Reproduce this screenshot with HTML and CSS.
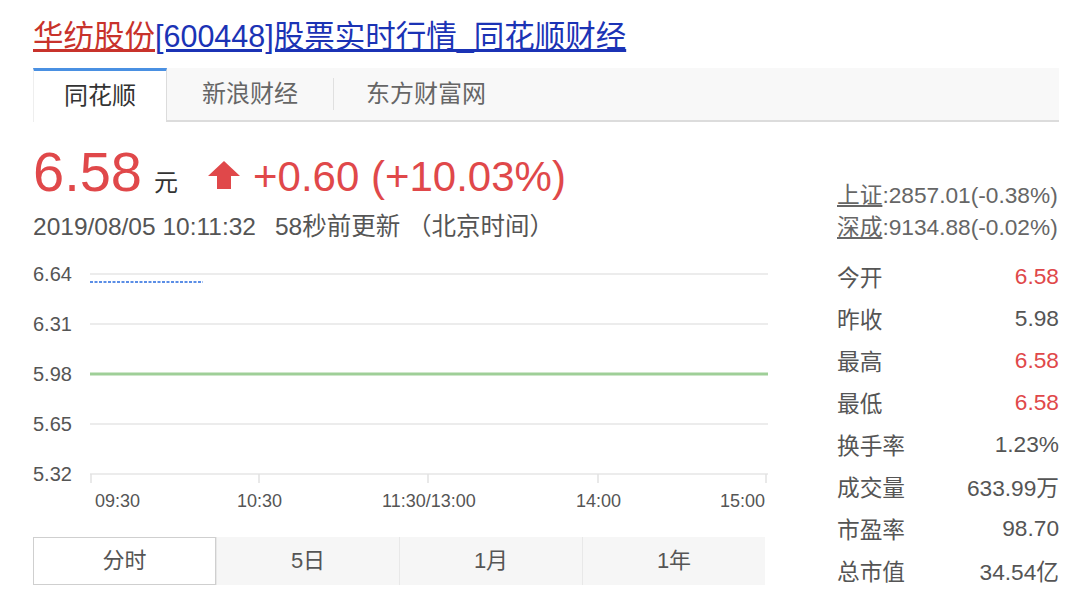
FILE: index.html
```html
<!DOCTYPE html>
<html lang="zh-CN">
<head>
<meta charset="utf-8">
<title>华纺股份[600448]股票实时行情</title>
<link rel="stylesheet" href="styles.css">
</head>
<body>
<div class="page">
  <h1 class="title"><a class="t-name" href="#">华纺股份</a><a class="t-rest" href="#">[600448]股票实时行情_同花顺财经</a></h1>
  <div class="tabs">
    <div class="tab active">同花顺</div>
    <div class="tab tab2">新浪财经</div>
    <span class="sep"></span>
    <div class="tab tab3">东方财富网</div>
  </div>
  <div class="main">
    <div class="left">
      <div class="price-row">
        <span class="price">6.58</span>
        <span class="unit">元</span>
        <svg class="arrow" width="32" height="28" viewBox="0 0 32 28"><polygon points="16,0 32,15 23,15 23,28 9,28 9,15 0,15" fill="#e0484a"/></svg>
        <span class="change">+0.60 (+10.03%)</span>
      </div>
      <div class="date">2019/08/05 10:11:32<span class="ago">58秒前更新</span> （北京时间）</div>
      <div class="chart">
        <div class="yaxis">
          <span>6.64</span><span>6.31</span><span>5.98</span><span>5.65</span><span>5.32</span>
        </div>
        <svg class="plot" width="678" height="220" viewBox="0 0 678 220">
          <g stroke="#ececec" stroke-width="2">
            <line x1="0" y1="10" x2="678" y2="10"/>
            <line x1="0" y1="60" x2="678" y2="60"/>
            <line x1="0" y1="110" x2="678" y2="110"/>
            <line x1="0" y1="160" x2="678" y2="160"/>
            <line x1="0" y1="210" x2="678" y2="210"/>
          </g>
          <g stroke="#e2e2e2" stroke-width="1.5">
            <line x1="1" y1="210" x2="1" y2="219"/>
            <line x1="169" y1="210" x2="169" y2="219"/>
            <line x1="338" y1="210" x2="338" y2="219"/>
            <line x1="508" y1="210" x2="508" y2="219"/>
            <line x1="676" y1="210" x2="676" y2="219"/>
          </g>
          <line x1="0" y1="110" x2="678" y2="110" stroke="#9fcf98" stroke-width="3"/>
          <line x1="0" y1="18" x2="113" y2="18" stroke="#5b8ee6" stroke-width="2" stroke-dasharray="3 1.5"/>
        </svg>
      </div>
      <div class="xaxis">
        <span class="x1">09:30</span>
        <span class="x2">10:30</span>
        <span class="x3">11:30/13:00</span>
        <span class="x4">14:00</span>
        <span class="x5">15:00</span>
      </div>
      <div class="periods">
        <div class="period on">分时</div>
        <div class="period">5日</div>
        <div class="period">1月</div>
        <div class="period">1年</div>
      </div>
    </div>
    <div class="right">
      <div class="idx"><a href="#" class="idx-name">上证</a>:2857.01(-0.38%)</div>
      <div class="idx"><a href="#" class="idx-name">深成</a>:9134.88(-0.02%)</div>
      <div class="stats">
        <div class="row"><span>今开</span><span class="up">6.58</span></div>
        <div class="row"><span>昨收</span><span>5.98</span></div>
        <div class="row"><span>最高</span><span class="up">6.58</span></div>
        <div class="row"><span>最低</span><span class="up">6.58</span></div>
        <div class="row"><span>换手率</span><span>1.23%</span></div>
        <div class="row"><span>成交量</span><span>633.99万</span></div>
        <div class="row"><span>市盈率</span><span>98.70</span></div>
        <div class="row"><span>总市值</span><span>34.54亿</span></div>
      </div>
    </div>
  </div>
</div>
</body>
</html>
```
FILE: styles.css
```css
body {
  margin: 0;
  background: #fff;
  color: #333;
  font-family: "Liberation Sans", "Noto Sans CJK SC", sans-serif;
}
.page {
  padding: 19px 0 0 33px;
  width: 1026px;
}
.title {
  margin: 0;
  font-size: 30.5px;
  font-weight: normal;
  line-height: 34px;
  white-space: nowrap;
}
.t-name { color: #c8322b; }
.t-rest { color: #1b33b5; }

.tabs {
  margin-top: 15px;
  height: 52px;
  display: flex;
  align-items: center;
  background: #f8f8f8;
  border-bottom: 2px solid #dcdcdc;
}
.tab {
  font-size: 24px;
  line-height: 52px;
  color: #666;
  text-align: center;
}
.tab.active {
  box-sizing: border-box;
  width: 134px;
  height: 54px;
  margin-bottom: -2px;
  align-self: flex-start;
  line-height: 49px;
  background: #fff;
  color: #333;
  border-top: 3px solid #4a90e2;
  border-left: 1px solid #eee;
  border-right: 1px solid #dcdcdc;
}
.tab2 { width: 166px; }
.sep {
  width: 1px;
  height: 32px;
  background: #e0e0e0;
}
.tab3 { padding-left: 32px; }

.main { display: flex; }
.left { width: 735px; }
.right { width: 222px; margin-left: 69px; padding-top: 57px; }

.price-row {
  margin-top: 20px;
  height: 60px;
  display: flex;
  align-items: baseline;
  color: #e0484a;
}
.price { font-size: 56px; line-height: 60px; }
.unit { font-size: 24px; color: #333; margin-left: 12px; }
.arrow { margin-left: 30px; align-self: center; margin-top: 6px; }
.change { font-size: 42px; margin-left: 13px; }

.date {
  margin-top: 11px;
  font-size: 24.5px;
  line-height: 28px;
  color: #555;
  white-space: nowrap;
}
.ago { margin-left: 19px; }

.chart {
  margin-top: 23px;
  display: flex;
}
.yaxis {
  width: 57px;
  display: flex;
  flex-direction: column;
  gap: 30px;
  font-size: 20px;
  line-height: 20px;
  color: #555;
}
.plot { display: block; }

.xaxis {
  margin: 6px 0 0 57px;
  width: 678px;
  display: grid;
  grid-template-columns: repeat(8, 1fr);
  font-size: 18px;
  line-height: 22px;
  color: #555;
}
.x1 { grid-column: 1; padding-left: 5px; }
.x2 { grid-column: 2 / 4; text-align: center; }
.x3 { grid-column: 4 / 6; text-align: center; }
.x4 { grid-column: 6 / 8; text-align: center; }
.x5 { grid-column: 8; text-align: right; padding-right: 3px; }

.periods {
  margin-top: 25px;
  width: 732px;
  height: 48px;
  display: grid;
  grid-template-columns: repeat(4, 1fr);
  background: #f6f6f6;
}
.period {
  font-size: 22px;
  line-height: 48px;
  text-align: center;
  color: #555;
  border-left: 1px solid #e8e8e8;
}
.period.on {
  box-sizing: border-box;
  background: #fff;
  border: 1px solid #cfcfcf;
  line-height: 46px;
}

.idx {
  font-size: 22.7px;
  line-height: 32px;
  color: #666;
  white-space: nowrap;
}
.idx-name { color: #666; }
.stats { margin-top: 12px; }
.row {
  height: 42px;
  display: flex;
  justify-content: space-between;
  align-items: center;
  font-size: 22.7px;
  color: #555;
}
.row .up { color: #e0484a; }
```
